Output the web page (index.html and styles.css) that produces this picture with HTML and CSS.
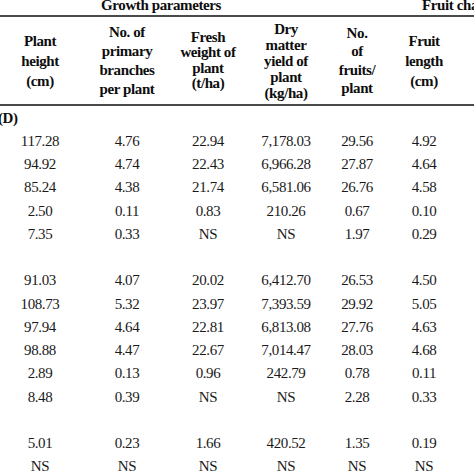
FILE: index.html
```html
<!DOCTYPE html>
<html>
<head>
<meta charset="utf-8">
<link rel="stylesheet" href="styles.css">
</head>
<body>
<div class="frame">
<table class="tbl">
  <colgroup>
    <col class="c1"><col class="c2"><col class="c3"><col class="c4"><col class="c5"><col class="c6"><col class="c7">
  </colgroup>
  <thead>
    <tr class="group">
      <th colspan="4">Growth parameters</th>
      <th colspan="3" class="fruitgrp">Fruit characters</th>
    </tr>
    <tr class="heads">
      <th>Plant<br>height<br>(cm)</th>
      <th class="lh19">No. of<br>primary<br>branches<br>per plant</th>
      <th class="lh15">Fresh<br>weight of<br>plant<br>(t/ha)</th>
      <th class="lh16">Dry<br>matter<br>yield of<br>plant<br>(kg/ha)</th>
      <th class="lh18">No.<br>of<br>fruits/<br>plant</th>
      <th>Fruit<br>length<br>(cm)</th>
      <th></th>
    </tr>
  </thead>
  <tbody>
    <tr><td class="label" colspan="7">(D)</td></tr>
    <tr><td>117.28</td><td>4.76</td><td>22.94</td><td>7,178.03</td><td>29.56</td><td>4.92</td><td></td></tr>
    <tr><td>94.92</td><td>4.74</td><td>22.43</td><td>6,966.28</td><td>27.87</td><td>4.64</td><td></td></tr>
    <tr><td>85.24</td><td>4.38</td><td>21.74</td><td>6,581.06</td><td>26.76</td><td>4.58</td><td></td></tr>
    <tr><td>2.50</td><td>0.11</td><td>0.83</td><td>210.26</td><td>0.67</td><td>0.10</td><td></td></tr>
    <tr><td>7.35</td><td>0.33</td><td>NS</td><td>NS</td><td>1.97</td><td>0.29</td><td></td></tr>
    <tr><td colspan="7"></td></tr>
    <tr><td>91.03</td><td>4.07</td><td>20.02</td><td>6,412.70</td><td>26.53</td><td>4.50</td><td></td></tr>
    <tr><td>108.73</td><td>5.32</td><td>23.97</td><td>7,393.59</td><td>29.92</td><td>5.05</td><td></td></tr>
    <tr><td>97.94</td><td>4.64</td><td>22.81</td><td>6,813.08</td><td>27.76</td><td>4.63</td><td></td></tr>
    <tr><td>98.88</td><td>4.47</td><td>22.67</td><td>7,014.47</td><td>28.03</td><td>4.68</td><td></td></tr>
    <tr><td>2.89</td><td>0.13</td><td>0.96</td><td>242.79</td><td>0.78</td><td>0.11</td><td></td></tr>
    <tr><td>8.48</td><td>0.39</td><td>NS</td><td>NS</td><td>2.28</td><td>0.33</td><td></td></tr>
    <tr><td colspan="7"></td></tr>
    <tr><td>5.01</td><td>0.23</td><td>1.66</td><td>420.52</td><td>1.35</td><td>0.19</td><td></td></tr>
    <tr><td>NS</td><td>NS</td><td>NS</td><td>NS</td><td>NS</td><td>NS</td><td></td></tr>
  </tbody>
</table>
</div>
</body>
</html>
```

FILE: styles.css
```css
html, body {
  margin: 0;
  padding: 0;
  background: #ffffff;
  overflow: hidden;
  width: 474px;
  height: 474px;
}

.frame {
  width: 474px;
  height: 474px;
  overflow: hidden;
}

.tbl {
  margin-left: -4px;
  margin-top: -6px;
  border-collapse: collapse;
  table-layout: fixed;
  width: 640px;
  font-family: "Liberation Serif", "Times New Roman", serif;
  font-size: 15px;
  letter-spacing: -0.4px;
  color: #1a1a1a;
}

.c1 { width: 88px; }
.c2 { width: 86px; }
.c3 { width: 76px; }
.c4 { width: 80px; }
.c5 { width: 62px; }
.c6 { width: 72px; }
.c7 { width: 176px; }

.tbl th {
  font-weight: bold;
  color: #0d0d0d;
  text-align: center;
  padding: 0;
}

.group th {
  height: 21px;
  line-height: 14px;
  vertical-align: middle;
  border-bottom: 2px solid #4a4a4a;
}

.group .fruitgrp {
  text-align: left;
  padding-left: 96px;
}

.heads th {
  height: 87px;
  line-height: 20px;
  vertical-align: middle;
  border-bottom: 2px solid #4a4a4a;
}

.heads .lh19 { line-height: 19px; }
.heads .lh18 { line-height: 18.5px; }
.heads .lh16 { line-height: 16px; }
.heads .lh15 { line-height: 15.5px; }

.tbl td {
  height: 23.25px;
  padding: 0;
  text-align: center;
  vertical-align: middle;
  line-height: 16px;
}

.tbl td.label {
  text-align: left;
  font-weight: bold;
  padding-left: 2px;
  color: #0d0d0d;
}
```
